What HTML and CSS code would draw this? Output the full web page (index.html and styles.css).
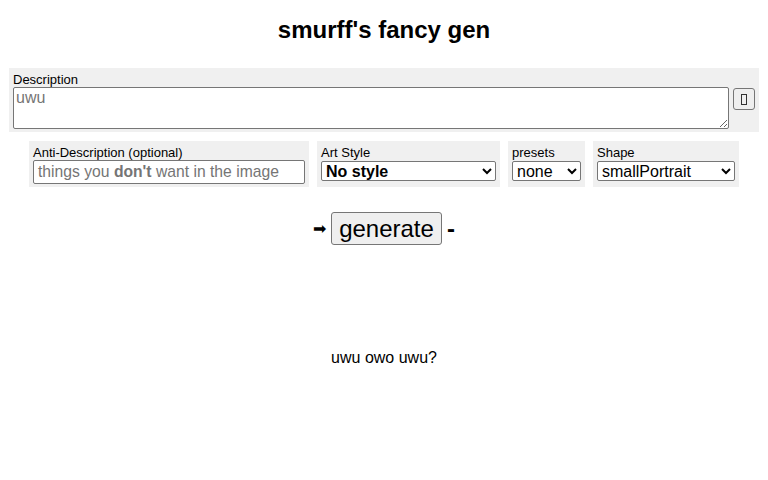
FILE: index.html
```html
<!DOCTYPE html>
<html>
<head>
<meta charset="utf-8">
<link rel="stylesheet" href="styles.css">
</head>
<body>
<h1 class="title">smurff's fancy gen</h1>
<div class="desc-box">
  <div class="desc-main">
    <label class="lbl">Description</label>
    <textarea class="desc-input" placeholder="uwu"></textarea>
  </div>
  <button class="icon-btn"><span class="tofu"></span></button>
</div>
<div class="options">
  <div class="opt">
    <label class="lbl">Anti-Description (optional)</label>
    <div class="anti-input"><span class="ph">things you <b>don't</b> want in the image</span></div>
  </div>
  <div class="opt">
    <label class="lbl">Art Style</label>
    <select class="sel sel-style"><option>No style</option></select>
  </div>
  <div class="opt">
    <label class="lbl">presets</label>
    <select class="sel sel-presets"><option>none</option></select>
  </div>
  <div class="opt">
    <label class="lbl">Shape</label>
    <select class="sel sel-shape"><option>smallPortrait</option></select>
  </div>
</div>
<div class="gen-row">
  <span class="arrow">➡</span>
  <button class="gen-btn">generate</button>
  <span class="dash">-</span>
</div>
<p class="status">uwu owo uwu?</p>
</body>
</html>
```
FILE: styles.css
```css
body {
  margin: 8px;
  font-family: "Liberation Sans", Arial, sans-serif;
  background: #fff;
  color: #000;
}
.title {
  font-size: 24px;
  font-weight: bold;
  text-align: center;
  margin: 8px 0 24px 0;
  line-height: 28px;
}
.desc-box {
  margin: 0 1px;
  background: #f0f0f0;
  display: flex;
  align-items: flex-start;
  gap: 4px;
  padding: 4px 4px 3px 4px;
}
.desc-main {
  flex: 1;
  display: flex;
  flex-direction: column;
}
.lbl {
  font-size: 13px;
  line-height: 15px;
  display: block;
}
.desc-input {
  box-sizing: border-box;
  height: 42px;
  width: 100%;
  margin: 0;
  font-family: "Liberation Sans", Arial, sans-serif;
  font-size: 16px;
  padding: 1px 2px;
  border: 1px solid #767676;
  border-radius: 2px;
  resize: vertical;
}
.desc-input::placeholder { color: #757575; }
.icon-btn {
  margin-top: 16px;
  width: 22px;
  height: 22px;
  padding: 0;
  border: 1px solid #767676;
  border-radius: 3px;
  background: #efefef;
  display: flex;
  align-items: center;
  justify-content: center;
}
.tofu {
  display: block;
  width: 4px;
  height: 9px;
  border: 1px solid #333;
}
.options {
  display: flex;
  justify-content: center;
  gap: 8px;
  margin-top: 9px;
}
.opt {
  background: #f0f0f0;
  padding: 4px 4px 3px 4px;
  display: flex;
  flex-direction: column;
}
.anti-input {
  box-sizing: border-box;
  width: 272px;
  height: 24px;
  border: 1px solid #767676;
  border-radius: 2px;
  background: #fff;
  font-size: 15.7px;
  line-height: 20px;
  padding: 1px 3px 1px 4px;
  color: #757575;
  white-space: nowrap;
  overflow: hidden;
}
.sel {
  box-sizing: border-box;
  height: 20px;
  margin-top: 1px;
  font-family: "Liberation Sans", Arial, sans-serif;
  font-size: 16px;
  border: 1px solid #767676;
  border-radius: 2px;
  background: #fff;
  color: #000;
}
.sel-style { width: 175px; font-weight: bold; }
.sel-presets { width: 69px; }
.sel-shape { width: 138px; }
.gen-row {
  display: flex;
  justify-content: center;
  align-items: center;
  gap: 5px;
  margin-top: 25px;
}
.arrow { font-size: 16px; }
.gen-btn {
  font-family: "Liberation Sans", Arial, sans-serif;
  font-size: 24px;
  height: 33px;
  padding: 0 7px;
  border: 1px solid #767676;
  border-radius: 3px;
  background: #efefef;
  color: #000;
}
.dash { font-size: 24px; font-weight: bold; }
.status {
  text-align: center;
  font-size: 16px;
  margin: 104px 0 0 0;
}
```
